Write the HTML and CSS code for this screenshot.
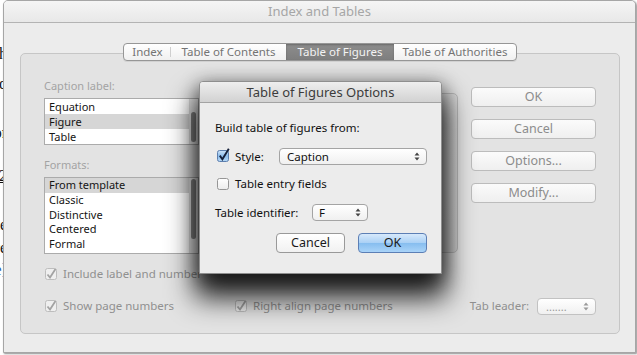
FILE: index.html
```html
<!DOCTYPE html>
<html>
<head>
<meta charset="utf-8">
<title>Index and Tables</title>
<link rel="stylesheet" href="styles.css">
</head>
<body>
<div class="doc">
  <div class="dl">Th</div>
  <div class="dl">to</div>
  <div class="dl">or</div>
  <div class="dl"><u>2</u></div>
  <div class="dl">te</div>
  <div class="dl">re</div>
  <div class="dl blue">e]</div>
</div>
<div class="win">
  <div class="titlebar">Index and Tables</div>
  <div class="wbody">
    <div class="tabs">
      <div class="seg">
        <span class="tab t1">Index</span><span class="tab t2">Table of Contents</span><span class="tab t3 sel">Table of Figures</span><span class="tab t4">Table of Authorities</span>
      </div>
    </div>
    <div class="group">
      <div class="top">
        <div class="leftcol">
          <div class="lbl">Caption label:</div>
          <div class="list l-cap">
            <div class="rows">
              <div class="row">Equation</div>
              <div class="row hl">Figure</div>
              <div class="row">Table</div>
            </div>
            <div class="sb"><div class="thumb"></div></div>
          </div>
          <div class="lbl lbl2">Formats:</div>
          <div class="list l-fmt">
            <div class="rows">
              <div class="row hl">From template</div>
              <div class="row">Classic</div>
              <div class="row">Distinctive</div>
              <div class="row">Centered</div>
              <div class="row">Formal</div>
            </div>
            <div class="sb"><div class="thumb"></div></div>
          </div>
          <div class="chk-row">
            <svg class="cb" width="12" height="12" viewBox="0 0 12 12"><rect x="0.5" y="0.5" width="11" height="11" rx="2" fill="#efefef" stroke="#bdbdbd"/><path d="M2.5 6.5 L5 9.5 L10.5 1" fill="none" stroke="#a3a3a3" stroke-width="1.8"/></svg>
            <span class="dim">Include label and number</span>
          </div>
        </div>
        <div class="preview"></div>
        <div class="btncol">
          <div class="btn">OK</div>
          <div class="btn">Cancel</div>
          <div class="btn">Options...</div>
          <div class="btn">Modify...</div>
        </div>
      </div>
      <div class="bottom">
        <div class="chk-row b1">
          <svg class="cb" width="12" height="12" viewBox="0 0 12 12"><rect x="0.5" y="0.5" width="11" height="11" rx="2" fill="#efefef" stroke="#bdbdbd"/><path d="M2.5 6.5 L5 9.5 L10.5 1" fill="none" stroke="#a3a3a3" stroke-width="1.8"/></svg>
          <span class="dim">Show page numbers</span>
        </div>
        <div class="chk-row b2">
          <svg class="cb" width="12" height="12" viewBox="0 0 12 12"><rect x="0.5" y="0.5" width="11" height="11" rx="2" fill="#efefef" stroke="#bdbdbd"/><path d="M2.5 6.5 L5 9.5 L10.5 1" fill="none" stroke="#a3a3a3" stroke-width="1.8"/></svg>
          <span class="dim">Right align page numbers</span>
        </div>
        <div class="tl">
          <span class="dim">Tab leader:</span>
          <div class="popup pop-dim"><span>.......</span>
            <svg class="arr" width="6" height="9" viewBox="0 0 6 9"><path d="M0.5 3.5 L3 0.5 L5.5 3.5Z M0.5 5.5 L3 8.5 L5.5 5.5Z" fill="#9a9a9a"/></svg>
          </div>
        </div>
      </div>
    </div>
  </div>

  <div class="sheet">
    <div class="sheet-title">Table of Figures Options</div>
    <div class="sheet-body">
      <div class="s-head">Build table of figures from:</div>
      <div class="s-row">
        <svg class="cb2" width="13" height="14" viewBox="0 0 13 14">
          <defs><linearGradient id="bl" x1="0" y1="0" x2="0" y2="1"><stop offset="0" stop-color="#cfe4f8"/><stop offset="0.5" stop-color="#8cbdec"/><stop offset="1" stop-color="#b6d8f6"/></linearGradient></defs>
          <rect x="0.5" y="2.5" width="11" height="11" rx="2" fill="url(#bl)" stroke="#5d7fae"/>
          <path d="M2.8 7.6 L5.4 11.2 L11.8 0.8" fill="none" stroke="#15203a" stroke-width="1.9"/>
        </svg>
        <span class="s-lbl">Style:</span>
        <div class="popup pop-cap"><span>Caption</span>
          <svg class="arr" width="6" height="9" viewBox="0 0 6 9"><path d="M0.5 3.5 L3 0.5 L5.5 3.5Z M0.5 5.5 L3 8.5 L5.5 5.5Z" fill="#444"/></svg>
        </div>
      </div>
      <div class="s-row2">
        <svg class="cb3" width="12" height="12" viewBox="0 0 12 12"><defs><linearGradient id="wh" x1="0" y1="0" x2="0" y2="1"><stop offset="0" stop-color="#ffffff"/><stop offset="1" stop-color="#ececec"/></linearGradient></defs><rect x="0.5" y="0.5" width="11" height="11" rx="2" fill="url(#wh)" stroke="#969696"/></svg>
        <span class="s-lbl">Table entry fields</span>
      </div>
      <div class="s-row3">
        <span class="s-id">Table identifier:</span>
        <div class="popup pop-f"><span>F</span>
          <svg class="arr" width="6" height="9" viewBox="0 0 6 9"><path d="M0.5 3.5 L3 0.5 L5.5 3.5Z M0.5 5.5 L3 8.5 L5.5 5.5Z" fill="#444"/></svg>
        </div>
      </div>
      <div class="s-btns">
        <div class="sbtn">Cancel</div>
        <div class="sbtn ok">OK</div>
      </div>
    </div>
  </div>
</div>
</body>
</html>
```

FILE: styles.css
```css
body {
  margin: 0;
  width: 637px;
  height: 355px;
  overflow: hidden;
  display: flex;
  align-items: flex-start;
  background: #ffffff;
  font-family: "Noto Sans", "DejaVu Sans", sans-serif;
}

/* document behind the window */
.doc {
  width: 3px;
  flex: none;
  overflow: hidden;
  font-family: "Liberation Serif", serif;
  font-size: 16px;
  color: #111;
}
.dl {
  height: 16px;
  line-height: 16px;
  display: flex;
  justify-content: flex-end;
  margin-right: -4px;
  white-space: nowrap;
}
.dl:nth-child(1) { margin-top: 46px; }
.dl:nth-child(2) { margin-top: 14px; }
.dl:nth-child(3) { margin-top: 33px; }
.dl:nth-child(4) { margin-top: 27px; }
.dl:nth-child(5) { margin-top: 33px; }
.dl:nth-child(6) { margin-top: 7px; }
.dl:nth-child(7) { margin-top: 6px; }
.blue { color: #2a5db0; }

/* main window */
.win {
  position: relative;
  flex: none;
  width: 631px;
  height: 351px;
  border: 1px solid #a6a6a6;
  border-radius: 5px 5px 0 0;
  background: #ececec;
  box-shadow: 1px 1px 2px rgba(0, 0, 0, 0.45);
}
.titlebar {
  height: 21px;
  line-height: 21px;
  border-bottom: 1px solid #b3b3b3;
  border-radius: 4px 4px 0 0;
  background: linear-gradient(#f5f5f5, #e8e8e8);
  text-align: center;
  font-size: 13px;
  color: #a6a6a6;
}
.wbody {
  padding: 20px 15px 18px 16px;
}

/* segmented tabs */
.tabs {
  position: relative;
  z-index: 1;
  display: flex;
  justify-content: center;
  height: 18px;
}
.seg {
  display: flex;
  height: 16px;
  border: 1px solid #969696;
  border-radius: 4px;
  overflow: hidden;
  background: linear-gradient(#ffffff, #f0f0f0);
  box-shadow: 0 1px 0 rgba(0, 0, 0, 0.08);
}
.tab {
  position: relative;
  display: block;
  height: 16px;
  line-height: 16px;
  text-align: center;
  font-size: 11.5px;
  color: #747474;
}
.t1 { width: 47px; }
.t2 { width: 115px; }
.t3 { width: 108px; }
.t4 { width: 122px; }
.t1::after {
  content: "";
  position: absolute;
  right: 0;
  top: 3px;
  height: 10px;
  width: 1px;
  background: #cfcfcf;
}
.tab.sel {
  background: linear-gradient(#8d8d8d, #7e7e7e);
  color: #f4f4f4;
  box-shadow: inset 0 1px 2px rgba(0, 0, 0, 0.25);
}

/* group box */
.group {
  margin-top: -8px;
  height: 281px;
  box-sizing: border-box;
  border: 1px solid #c6c6c6;
  border-radius: 5px;
  background: #e3e3e3;
  padding: 25px 23px 0 23px;
}
.top {
  display: flex;
  align-items: flex-start;
}
.leftcol {
  width: 155px;
  flex: none;
}
.lbl {
  height: 14px;
  line-height: 14px;
  font-size: 11px;
  color: #a3a3a3;
}
.lbl2 { margin-top: 13px; }
.list {
  margin-top: 5px;
  display: flex;
  border: 1px solid #ababab;
  background: #ffffff;
  box-sizing: border-box;
  overflow: hidden;
}
.l-cap { height: 47px; }
.l-fmt { height: 77px; }
.rows { flex: 1; }
.row {
  height: 15px;
  line-height: 15px;
  padding-left: 4px;
  font-size: 11px;
  color: #151515;
}
.row.hl { background: #d6d6d6; }
.l-fmt .row { height: 14.8px; line-height: 14.8px; }
.sb {
  width: 8px;
  flex: none;
  background: linear-gradient(90deg, #ececec, #f7f7f7);
  border-left: 1px solid #e2e2e2;
}
.thumb {
  width: 5px;
  margin-left: 1px;
  border-radius: 3px;
  background: #8a8a8a;
}
.l-cap .thumb { margin-top: 13px; height: 30px; }
.l-fmt .thumb { margin-top: 1px; height: 60px; }

.chk-row {
  display: flex;
  align-items: center;
  height: 14px;
  margin-top: 13px;
}
.cb {
  flex: none;
  margin-left: 1px;
  margin-right: 6px;
}
.dim {
  font-size: 11.5px;
  line-height: 14px;
  color: #909090;
  white-space: nowrap;
}

.preview {
  flex: none;
  width: 245px;
  height: 160px;
  margin: 14px 0 0 14px;
  box-sizing: border-box;
  border: 1px solid #bcbcbc;
  border-radius: 5px;
  background: linear-gradient(#dcdcdc, #d6d6d6);
}
.btncol {
  flex: none;
  width: 125px;
  margin: 8px 0 0 13px;
  display: flex;
  flex-direction: column;
  gap: 12px;
}
.btn {
  height: 20px;
  box-sizing: border-box;
  border: 1px solid #bcbcbc;
  border-radius: 4px;
  background: linear-gradient(#fbfbfb, #efefef);
  text-align: center;
  line-height: 18px;
  font-size: 12.5px;
  color: #8c8c8c;
}

.bottom {
  display: flex;
  align-items: center;
  height: 18px;
  margin-top: 16px;
}
.bottom .chk-row { margin-top: 0; }
.b1 { width: 191px; flex: none; }
.b2 { flex: none; }
.b2 .cb { margin-left: 0; }
.tl {
  margin-left: auto;
  display: flex;
  align-items: center;
}
.tl .dim { margin-right: 8px; }

/* popups */
.popup {
  position: relative;
  box-sizing: border-box;
  height: 17px;
  border: 1px solid #a4a4a4;
  border-radius: 4px;
  background: linear-gradient(#ffffff, #f0f0f0);
  display: flex;
  align-items: center;
  padding-left: 7px;
  font-size: 11.5px;
  color: #111;
}
.popup .arr {
  position: absolute;
  right: 6px;
  top: 3px;
}
.pop-dim {
  width: 59px;
  border-color: #c2c2c2;
  color: #9a9a9a;
  padding-left: 8px;
  font-size: 11px;
}

/* sheet dialog */
.sheet {
  position: absolute;
  left: 195px;
  top: 80px;
  width: 241px;
  height: 191px;
  border: 1px solid #8e8e8e;
  border-radius: 4px 4px 0 0;
  background: #ececec;
  box-shadow: 0 20px 28px 4px rgba(0, 0, 0, 0.85), 0 4px 18px 2px rgba(0, 0, 0, 0.4);
  z-index: 5;
}
.sheet-title {
  height: 20px;
  line-height: 20px;
  border-bottom: 1px solid #a3a3a3;
  border-radius: 3px 3px 0 0;
  background: linear-gradient(#eeeeee, #d2d2d2);
  text-align: center;
  font-size: 13px;
  color: #3c3c3c;
}
.sheet-body {
  padding: 18px 14px 0 15px;
  font-size: 11.5px;
  color: #111;
}
.s-head {
  height: 14px;
  line-height: 14px;
}
.s-row {
  display: flex;
  align-items: center;
  height: 17px;
  margin-top: 13px;
}
.cb2 {
  flex: none;
  margin-left: 2px;
  margin-top: -3px;
}
.s-lbl {
  margin-left: 5px;
  line-height: 14px;
}
.pop-cap {
  margin-left: auto;
  width: 148px;
}
.s-row2 {
  display: flex;
  align-items: center;
  height: 14px;
  margin-top: 12px;
}
.cb3 {
  flex: none;
  margin-left: 2px;
  margin-right: 1px;
}
.s-row3 {
  display: flex;
  align-items: center;
  height: 17px;
  margin-top: 13px;
}
.s-id {
  width: 97px;
  flex: none;
}
.pop-f {
  width: 56px;
  padding-left: 6px;
}
.s-btns {
  display: flex;
  justify-content: flex-end;
  gap: 13px;
  margin-top: 12px;
}
.sbtn {
  width: 69px;
  height: 20px;
  box-sizing: border-box;
  border: 1px solid #999999;
  border-radius: 4px;
  background: linear-gradient(#ffffff, #f1f1f1);
  text-align: center;
  line-height: 18px;
  font-size: 12.5px;
  color: #1a1a1a;
}
.sbtn.ok {
  border-color: #5c7fb5;
  background: linear-gradient(#d7e9fb, #a9d0f5 50%, #86bdef 51%, #a9d3f8);
}
```
